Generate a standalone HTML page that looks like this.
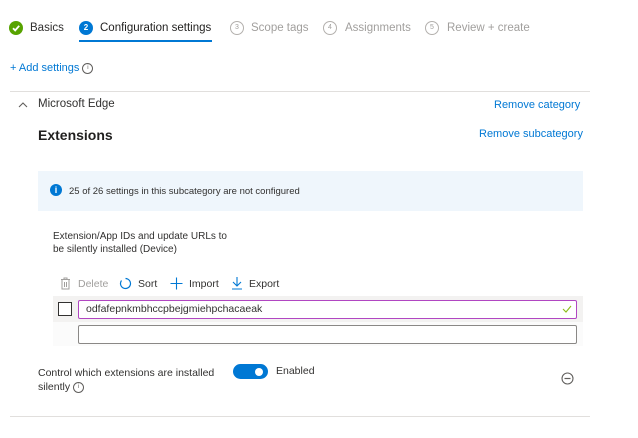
<!DOCTYPE html>
<html><head><style>
body{margin:0;width:638px;height:438px;background:#fff;font-family:"Liberation Sans",sans-serif;color:#323130;position:relative;overflow:hidden}
.a{position:absolute;white-space:nowrap}
.g{color:#a19f9d}
.l{color:#0078d4}
.c{display:inline-block;width:12px;height:12px;border-radius:50%;border:1px solid #b3b0ad;font-size:7px;text-align:center;line-height:12px;color:#a19f9d;vertical-align:middle}
</style></head><body>
<div class="a" style="left:9px;top:21px;width:14px;height:14px;border-radius:50%;background:#57a300"></div>
<svg class="a" style="left:9px;top:21px" width="14" height="14"><path d="M4 7.2 L6.2 9.4 L10.2 4.8" stroke="#fff" stroke-width="1.8" fill="none"/></svg>
<div class="a" style="left:30px;top:22px;font-size:11.5px">Basics</div>
<div class="a" style="left:79px;top:21px;width:14px;height:14px;border-radius:50%;background:#0078d4;color:#fff;font-size:8px;text-align:center;line-height:14px;font-weight:bold">2</div>
<div class="a" style="left:100px;top:22px;font-size:11.5px;color:#201f1e">Configuration settings</div>
<div class="a" style="left:79px;top:40px;width:133px;height:2px;background:#0078d4"></div>
<div class="a g" style="left:230px;top:21px;font-size:11.5px"><span class="c">3</span></div>
<div class="a g" style="left:251px;top:22px;font-size:11.5px">Scope tags</div>
<div class="a g" style="left:323px;top:21px;font-size:11.5px"><span class="c">4</span></div>
<div class="a g" style="left:345px;top:22px;font-size:11.5px">Assignments</div>
<div class="a g" style="left:425px;top:21px;font-size:11.5px"><span class="c">5</span></div>
<div class="a g" style="left:447px;top:22px;font-size:11.5px">Review + create</div>
<div class="a l" style="left:10px;top:62px;font-size:11px">+ Add settings <span class="c" style="width:9px;height:9px;line-height:9px;border-color:#605e5c;color:#605e5c;font-size:6px">i</span></div>
<div class="a" style="left:10px;top:91px;width:580px;height:1px;background:#e1dfdd"></div>
<svg class="a" style="left:18px;top:101px" width="10" height="8"><path d="M1 6 L5 2 L9 6" stroke="#605e5c" stroke-width="1.1" fill="none"/></svg>
<div class="a" style="left:38px;top:98px;font-size:11.5px">Microsoft Edge</div>
<div class="a l" style="left:494px;top:99px;font-size:11px">Remove category</div>
<div class="a" style="left:38px;top:127px;font-size:14px;font-weight:bold;color:#201f1e">Extensions</div>
<div class="a l" style="left:479px;top:128px;font-size:11px">Remove subcategory</div>
<div class="a" style="left:38px;top:171px;width:545px;height:40px;background:#eff6fc"></div>
<div class="a" style="left:50px;top:184px;width:12px;height:12px;border-radius:50%;background:#0078d4;color:#fff;font-size:9px;font-weight:bold;text-align:center;line-height:12px">i</div>
<div class="a" style="left:69px;top:186px;font-size:9.5px">25 of 26 settings in this subcategory are not configured</div>
<div class="a" style="left:53px;top:230px;font-size:10px;line-height:13px">Extension/App IDs and update URLs to<br>be silently installed (Device)</div>
<svg class="a" style="left:60px;top:277px" width="11" height="13"><path d="M1 2.5 H10 M4 2.5 V1 H7 V2.5 M2 2.5 V12 H9 V2.5 M4.5 5 V10 M6.5 5 V10" stroke="#a19f9d" fill="none"/></svg>
<div class="a g" style="left:78px;top:278px;font-size:10.5px">Delete</div>
<svg class="a" style="left:119px;top:277px" width="13" height="13"><path d="M6.5 1.5 A5 5 0 1 1 2.5 3.5" stroke="#0078d4" stroke-width="1.2" fill="none"/></svg>
<div class="a" style="left:138px;top:278px;font-size:10.5px">Sort</div>
<svg class="a" style="left:170px;top:277px" width="13" height="13"><path d="M6.5 0.5 V12.5 M0.5 6.5 H12.5" stroke="#0078d4" stroke-width="1.1"/></svg>
<div class="a" style="left:189px;top:278px;font-size:10.5px">Import</div>
<svg class="a" style="left:231px;top:276px" width="12" height="14"><path d="M6 1 V10 M2 6 L6 10 L10 6 M1 13 H11" stroke="#0078d4" stroke-width="1.1" fill="none"/></svg>
<div class="a" style="left:249px;top:278px;font-size:10.5px">Export</div>
<div class="a" style="left:53px;top:296px;width:530px;height:26px;background:#f3f2f1"></div>
<div class="a" style="left:58px;top:302px;width:12px;height:12px;border:1px solid #323130;background:#fff"></div>
<div class="a" style="left:78px;top:300px;width:497px;height:17px;border:1px solid #b146c2;border-radius:2px;background:#fff"></div>
<div class="a" style="left:86px;top:303px;font-size:10.5px">odfafepnkmbhccpbejgmiehpchacaeak</div>
<svg class="a" style="left:562px;top:305px" width="10" height="8"><path d="M1 4 L4 7 L9 1" stroke="#8cbd18" stroke-width="1.1" fill="none"/></svg>
<div class="a" style="left:53px;top:322px;width:530px;height:24px;background:#fbfbfb"></div>
<div class="a" style="left:78px;top:325px;width:497px;height:17px;border:1px solid #8a8886;border-radius:2px;background:#fff"></div>
<div class="a" style="left:38px;top:366px;font-size:10.5px;line-height:14px">Control which extensions are installed<br>silently <span class="c" style="width:9px;height:9px;line-height:9px;border-color:#605e5c;color:#605e5c;font-size:6px">i</span></div>
<div class="a" style="left:233px;top:364px;width:35px;height:15px;border-radius:8px;background:#0078d4"></div>
<div class="a" style="left:255px;top:368px;width:8px;height:8px;border-radius:50%;background:#fff"></div>
<div class="a" style="left:276px;top:365px;font-size:10.5px">Enabled</div>
<svg class="a" style="left:561px;top:372px" width="13" height="13"><circle cx="6.5" cy="6.5" r="5.5" stroke="#605e5c" stroke-width="1.1" fill="none"/><path d="M3.5 6.5 H9.5" stroke="#605e5c" stroke-width="1.2"/></svg>
<div class="a" style="left:10px;top:416px;width:580px;height:1px;background:#e1dfdd"></div>
</body></html>
